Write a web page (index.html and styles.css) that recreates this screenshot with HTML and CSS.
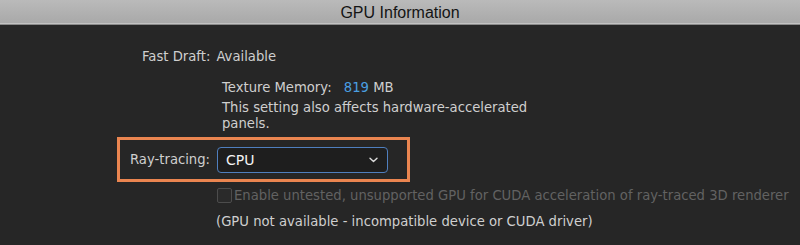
FILE: index.html
```html
<!DOCTYPE html>
<html>
<head>
<meta charset="utf-8">
<link rel="stylesheet" href="styles.css">
</head>
<body>
<div class="window">
  <div class="titlebar">GPU Information</div>
  <div class="content">
    <div class="row fast">
      <span class="label">Fast Draft:</span>
      <span class="value">Available</span>
    </div>
    <div class="info">
      <div class="texture">Texture Memory: <span class="num">819</span> MB</div>
      <div class="note">This setting also affects hardware-accelerated<br>panels.</div>
    </div>
    <div class="highlight">
      <span class="label">Ray-tracing:</span>
      <div class="select">
        <span class="sel-value">CPU</span>
        <svg class="chev" width="9" height="6" viewBox="0 0 9 6"><path d="M1 1.2 L4.5 4.6 L8 1.2" fill="none" stroke="#dcdcdc" stroke-width="1.4" stroke-linecap="round" stroke-linejoin="round"/></svg>
      </div>
    </div>
    <div class="check-row">
      <span class="checkbox"></span>
      <span class="check-label">Enable untested, unsupported GPU for CUDA acceleration of ray-traced 3D renderer</span>
    </div>
    <div class="status">(GPU not available - incompatible device or CUDA driver)</div>
  </div>
</div>
</body>
</html>
```
FILE: styles.css
```css
html, body {
  margin: 0;
  padding: 0;
  background: #262626;
}
.window {
  width: 800px;
  height: 245px;
  overflow: hidden;
  font-family: "DejaVu Sans", "Open Sans", sans-serif;
  font-size: 13.2px;
  color: #cfcfcf;
}
.titlebar {
  height: 25px;
  box-sizing: border-box;
  background: linear-gradient(#bababa, #a8a8a8);
  border-bottom: 1px solid #8a8a8a;
  color: #141414;
  font-family: "Liberation Sans", Arial, sans-serif;
  font-size: 16px;
  text-align: center;
  line-height: 25px;
  box-shadow: inset 0 -1px 0 #c2c2c2;
}
.content {
  display: flex;
  flex-direction: column;
  padding-top: 23px;
}
.row.fast {
  display: flex;
  gap: 6px;
  padding-left: 142px;
  line-height: 18px;
}
.info {
  padding-left: 222px;
  padding-top: 13px;
}
.texture {
  line-height: 18px;
  margin-bottom: 3px;
}
.num {
  color: #4a9fe2;
  margin-left: 8px;
}
.note {
  line-height: 16px;
}
.highlight {
  margin-left: 117px;
  margin-top: 5px;
  width: 293px;
  height: 45px;
  box-sizing: border-box;
  border: 3px solid #ea8550;
  display: flex;
  align-items: center;
  padding-left: 10px;
  gap: 7px;
}
.select {
  width: 171px;
  height: 26px;
  box-sizing: border-box;
  border: 1.5px solid #4f7fbf;
  border-radius: 4px;
  background: #1e1e1e;
  display: flex;
  align-items: center;
  justify-content: space-between;
  padding: 0 9px 0 8px;
  color: #f4f4f4;
}
.sel-value {
  font-size: 14px;
}
.check-row {
  display: flex;
  align-items: center;
  gap: 2px;
  padding-left: 217px;
  margin-top: 5px;
  height: 16px;
}
.checkbox {
  width: 13px;
  height: 13px;
  border: 1px solid #4c4c4c;
  border-radius: 2px;
  background: #2a2a2a;
}
.check-label {
  color: #626262;
}
.status {
  padding-left: 216px;
  margin-top: 10px;
  line-height: 18px;
}
```
